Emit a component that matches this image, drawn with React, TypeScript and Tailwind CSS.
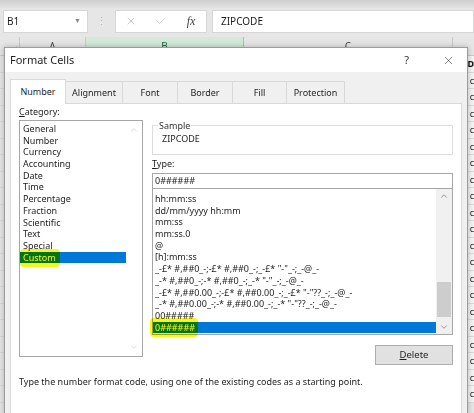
import { X, Check, ChevronUp, ChevronDown } from 'lucide-react';

const categories = [
  'General',
  'Number',
  'Currency',
  'Accounting',
  'Date',
  'Time',
  'Percentage',
  'Fraction',
  'Scientific',
  'Text',
  'Special',
  'Custom',
];

const formats = [
  'hh:mm:ss',
  'dd/mm/yyyy hh:mm',
  'mm:ss',
  'mm:ss.0',
  '@',
  '[h]:mm:ss',
  '_-£* #,##0_-;-£* #,##0_-;_-£* "-"_-;_-@_-',
  '_-* #,##0_-;-* #,##0_-;_-* "-"_-;_-@_-',
  '_-£* #,##0.00_-;-£* #,##0.00_-;_-£* "-"??_-;_-@_-',
  '_-* #,##0.00_-;-* #,##0.00_-;_-* "-"??_-;_-@_-',
  '00#####',
  '0######',
];

const tabs = [
  { label: 'Number', w: 'w-[56px]' },
  { label: 'Alignment', w: 'w-[58px]' },
  { label: 'Font', w: 'w-[56px]' },
  { label: 'Border', w: 'w-[56px]' },
  { label: 'Fill', w: 'w-[55px]' },
  { label: 'Protection', w: 'w-[59px]' },
];

function FormulaBar() {
  return (
    <div className="flex h-[26px] items-center bg-[#e6e6e6]">
      <div className="ml-[3px] flex h-[23px] w-[85px] items-center border border-[#d6d6d6] bg-white px-[3px] text-[10px]">
        <span>B1</span>
        <span className="ml-auto mr-[3px] text-[7px] text-[#8a8a8a]">▼</span>
      </div>
      <div className="w-[27px] text-center text-[11px] text-[#b9b9b9]">⋮</div>
      <div className="flex h-[23px] w-[92px] items-center border border-[#d6d6d6] bg-white">
        <div className="flex w-[30px] justify-center">
          <X size={12} strokeWidth={1.2} className="text-[#a3a3a3]" />
        </div>
        <div className="flex w-[30px] justify-center">
          <Check size={12} strokeWidth={1.2} className="text-[#b8b8b8]" />
        </div>
        <div className="flex w-[30px] justify-center font-['Liberation_Serif',serif] text-[12px] italic leading-none text-[#444]">
          fx
        </div>
      </div>
      <div className="ml-[5px] flex h-[23px] flex-1 items-center border border-[#d6d6d6] bg-white pl-[8px] text-[10px]">
        ZIPCODE
      </div>
    </div>
  );
}

function Sheet() {
  const rows = Array.from({ length: 21 });
  return (
    <div className="flex flex-col">
      <div className="flex h-[19px] items-center border-b border-[#c9c9c9] bg-[#e6e6e6] text-[10px] text-[#444]">
        <div className="flex h-full w-[20px] items-end justify-end border-r border-[#c9c9c9] pb-[3px] pr-[2px]">
          <div className="h-0 w-0 border-b-[6px] border-l-[6px] border-b-[#b5b5b5] border-l-transparent" />
        </div>
        <div className="flex h-full w-[66px] items-center justify-center border-r border-[#c9c9c9]">A</div>
        <div className="flex h-full w-[158px] items-center justify-center border-r border-[#9fc9ac] bg-[#d3e9d9] text-[#1d5e38]">
          B
        </div>
        <div className="flex h-full w-[209px] items-center justify-center border-r border-[#c9c9c9]">C</div>
        <div className="flex-1" />
      </div>
      {rows.map((_, i) => (
        <div key={i} className="flex h-[16.5px] border-b border-[#dadada]">
          <div className="w-[20px] border-r border-[#c9c9c9] bg-[#e6e6e6]" />
          <div className="w-[446px] bg-white" />
          <div
            className={`flex-1 bg-[#f4f4f4] pl-[4px] text-[9px] leading-[16px] ${
              i === 0 ? 'font-bold text-[#111]' : 'text-[#222]'
            }`}
          >
            {i === 0 ? 'D' : 'c'}
          </div>
        </div>
      ))}
    </div>
  );
}

function CategoryList() {
  return (
    <div className="flex h-[237px] border border-[#a6a6a6] bg-white">
      <div className="flex-1 pt-[2px]">
        {categories.map((c) => (
          <div
            key={c}
            className={`h-[11.7px] pl-[3px] text-[9px] leading-[11.7px] ${
              c === 'Custom' ? 'bg-[#0078d7] text-white' : ''
            }`}
          >
            {c}
          </div>
        ))}
      </div>
      <div className="flex w-[16px] flex-col items-center justify-between py-[4px] text-[#c8c8c8]">
        <ChevronUp size={10} strokeWidth={1.5} />
        <ChevronDown size={10} strokeWidth={1.5} />
      </div>
    </div>
  );
}

function TypeList() {
  return (
    <div className="flex h-[146px] border border-t-0 border-[#a6a6a6] bg-white">
      <div className="flex-1 overflow-hidden pt-[4px]">
        {formats.map((f, i) => (
          <div
            key={i}
            className={`h-[11.7px] whitespace-pre pl-[2px] text-[9px] leading-[11.7px] ${
              i === formats.length - 1 ? 'bg-[#0078d7] text-white' : ''
            }`}
          >
            {f}
          </div>
        ))}
      </div>
      <div className="flex w-[16px] flex-col bg-[#f0f0f0]">
        <div className="flex h-[14px] items-center justify-center text-[#606060]">
          <ChevronUp size={10} strokeWidth={1.5} />
        </div>
        <div className="h-[79px]" />
        <div className="mx-[1px] h-[35px] bg-[#cdcdcd]" />
        <div className="flex-1" />
        <div className="flex h-[14px] items-center justify-center text-[#606060]">
          <ChevronDown size={10} strokeWidth={1.5} />
        </div>
      </div>
    </div>
  );
}

function FormatCellsDialog() {
  return (
    <div className="absolute left-[4px] top-[47px] flex h-[370px] w-[464px] flex-col border border-[#9c9c9c] bg-[#f0f0f0] text-[#1e1e1e] shadow-[0_0_6px_rgba(0,0,0,0.25)]">
      <div className="flex h-[24px] items-center bg-white pl-[5px] text-[11px]">
        <span>Format Cells</span>
        <span className="ml-auto mr-[33px] text-[11px] text-[#333]">?</span>
        <X size={13} strokeWidth={1} className="mr-[12px] text-[#222]" />
      </div>

      <div className="ml-[5px] mt-[7px] flex h-[24px] items-end text-[9px]">
        {tabs.map((t, i) => (
          <div
            key={t.label}
            className={`${t.w} flex items-center justify-center border border-b-0 border-[#d9d9d9] ${
              i === 0 ? 'relative z-10 -mb-px h-[25px] bg-white pb-px' : '-ml-px h-[22px] bg-[#f0f0f0]'
            }`}
          >
            {t.label}
          </div>
        ))}
      </div>

      <div className="mx-[5px] flex flex-1 flex-col border border-[#d9d9d9] bg-white px-[8px] text-[9px]">
        <div className="flex">
          <div className="flex w-[124px] flex-col">
            <div className="mt-[2px] h-[12px] leading-[12px]">
              <span className="underline">C</span>ategory:
            </div>
            <div className="mt-[2px]">
              <CategoryList />
            </div>
          </div>

          <div className="ml-[9px] flex flex-1 flex-col">
            <fieldset className="mt-[16px] h-[35px] border border-[#dcdcdc] px-[5px]">
              <legend className="px-[1px] text-[9px] leading-[11px] text-[#333]">Sample</legend>
              <div className="mt-[2px] pl-[4px] leading-[12px]">ZIPCODE</div>
            </fieldset>
            <div className="mt-[3px] h-[12px] leading-[12px]">
              <span className="underline">T</span>ype:
            </div>
            <div className="mt-[3px] flex h-[16px] items-center border border-[#a6a6a6] bg-white pl-[2px]">
              0######
            </div>
            <TypeList />
            <div className="mt-[10px] flex justify-end">
              <div className="flex h-[20px] w-[78px] items-center justify-center border border-[#adadad] bg-[#e1e1e1] text-[9.5px]">
                <span className="underline">D</span>elete
              </div>
            </div>
          </div>
        </div>
        <div className="mt-[11px] leading-[12px]">
          Type the number format code, using one of the existing codes as a starting point.
        </div>
      </div>
    </div>
  );
}

export default function App() {
  return (
    <div className="relative h-[413px] w-[474px] overflow-hidden bg-[#e6e6e6] font-['Noto_Sans',sans-serif] text-[#1e1e1e]">
      <div className="h-[8px] bg-gradient-to-b from-[#cfcfcf] to-[#e2e2e2]" />
      <FormulaBar />
      <div className="h-[3px]" />
      <Sheet />
      <FormatCellsDialog />
      {/* marker highlights drawn over the selected items */}
      <div className="absolute left-[20px] top-[249px] h-[18px] w-[40px] rounded-[4px] bg-[#f6f61c] mix-blend-multiply" />
      <div className="absolute left-[150px] top-[318px] h-[19px] w-[48px] rounded-[4px] bg-[#f6f61c] mix-blend-multiply" />
    </div>
  );
}
